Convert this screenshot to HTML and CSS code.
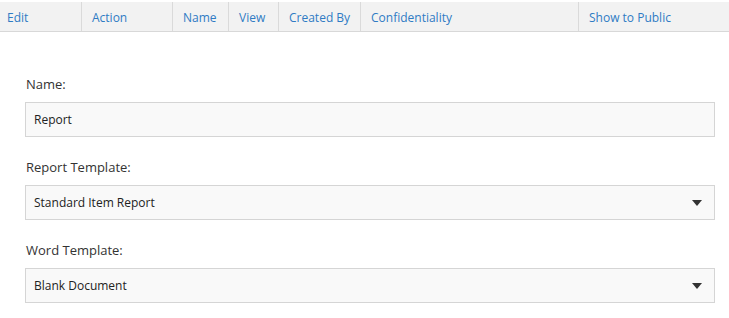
FILE: index.html
```html
<!DOCTYPE html>
<html>
  <head>
    <meta charset="utf-8" />
    <meta name="viewport" content="width=device-width, initial-scale=1" />
    <link rel="stylesheet" href="styles.css">
  </head>
  <body>
    <div class="grid-header">
      <div class="col col-edit">Edit</div>
      <div class="col col-action">Action</div>
      <div class="col col-name">Name</div>
      <div class="col col-view">View</div>
      <div class="col col-created">Created By</div>
      <div class="col col-conf">Confidentiality</div>
      <div class="col col-public">Show to Public</div>
    </div>

    <div class="form">
      <div class="field">
        <label for="name">Name:</label>
        <div class="box">Report</div>
      </div>
      <div class="field">
        <label for="">Report Template:</label>
        <div class="box select">
          <span>Standard Item Report</span>
          <span class="arrow"></span>
        </div>
      </div>
      <div class="field">
        <label for="">Word Template:</label>
        <div class="box select">
          <span>Blank Document</span>
          <span class="arrow"></span>
        </div>
      </div>
    </div>
  </body>
</html>
```

FILE: styles.css
```css
html,
body,
div {
  margin: 0;
  padding: 0;
  box-sizing: border-box;
}

body {
  font-family: "Segoe UI", "Open Sans", sans-serif;
  background: #fff;
  color: #333;
}

.grid-header {
  display: flex;
  margin-top: 2px;
  height: 30px;
  background-color: #f2f2f2;
  border-bottom: 1px solid #d8d8d8;
}
.grid-header .col {
  font-size: 12px;
  line-height: 29px;
  padding-top: 1px;
  color: #2f7bc4;
  padding-left: 7px;
  border-right: 1px solid #dadada;
  white-space: nowrap;
}
.col-edit { width: 82px; }
.col-action { width: 91px; padding-left: 10px !important; }
.col-name { width: 56px; padding-left: 10px !important; }
.col-view { width: 50px; padding-left: 10px !important; }
.col-created { width: 82px; padding-left: 10px !important; }
.col-conf { width: 218px; padding-left: 10px !important; }
.col-public { flex: 1; padding-left: 10px !important; border-right: 0 !important; }

.form {
  padding: 43px 14px 0 25px;
}
.field {
  margin-bottom: 21px;
}
.field label {
  display: block;
  font-size: 13px;
  line-height: 18px;
  color: #333;
  margin-bottom: 9px;
  padding-left: 1px;
}
.box {
  display: flex;
  align-items: center;
  justify-content: space-between;
  height: 35px;
  background-color: #f9f9f9;
  border: 1px solid #d5d5d5;
  padding: 0 12px 0 8px;
  font-size: 12px;
  color: #222;
}
.arrow {
  width: 0;
  height: 0;
  border: 5px solid #333;
  border-left-color: transparent;
  border-right-color: transparent;
  border-bottom-width: 0px;
  border-top-width: 6px;
}
```
